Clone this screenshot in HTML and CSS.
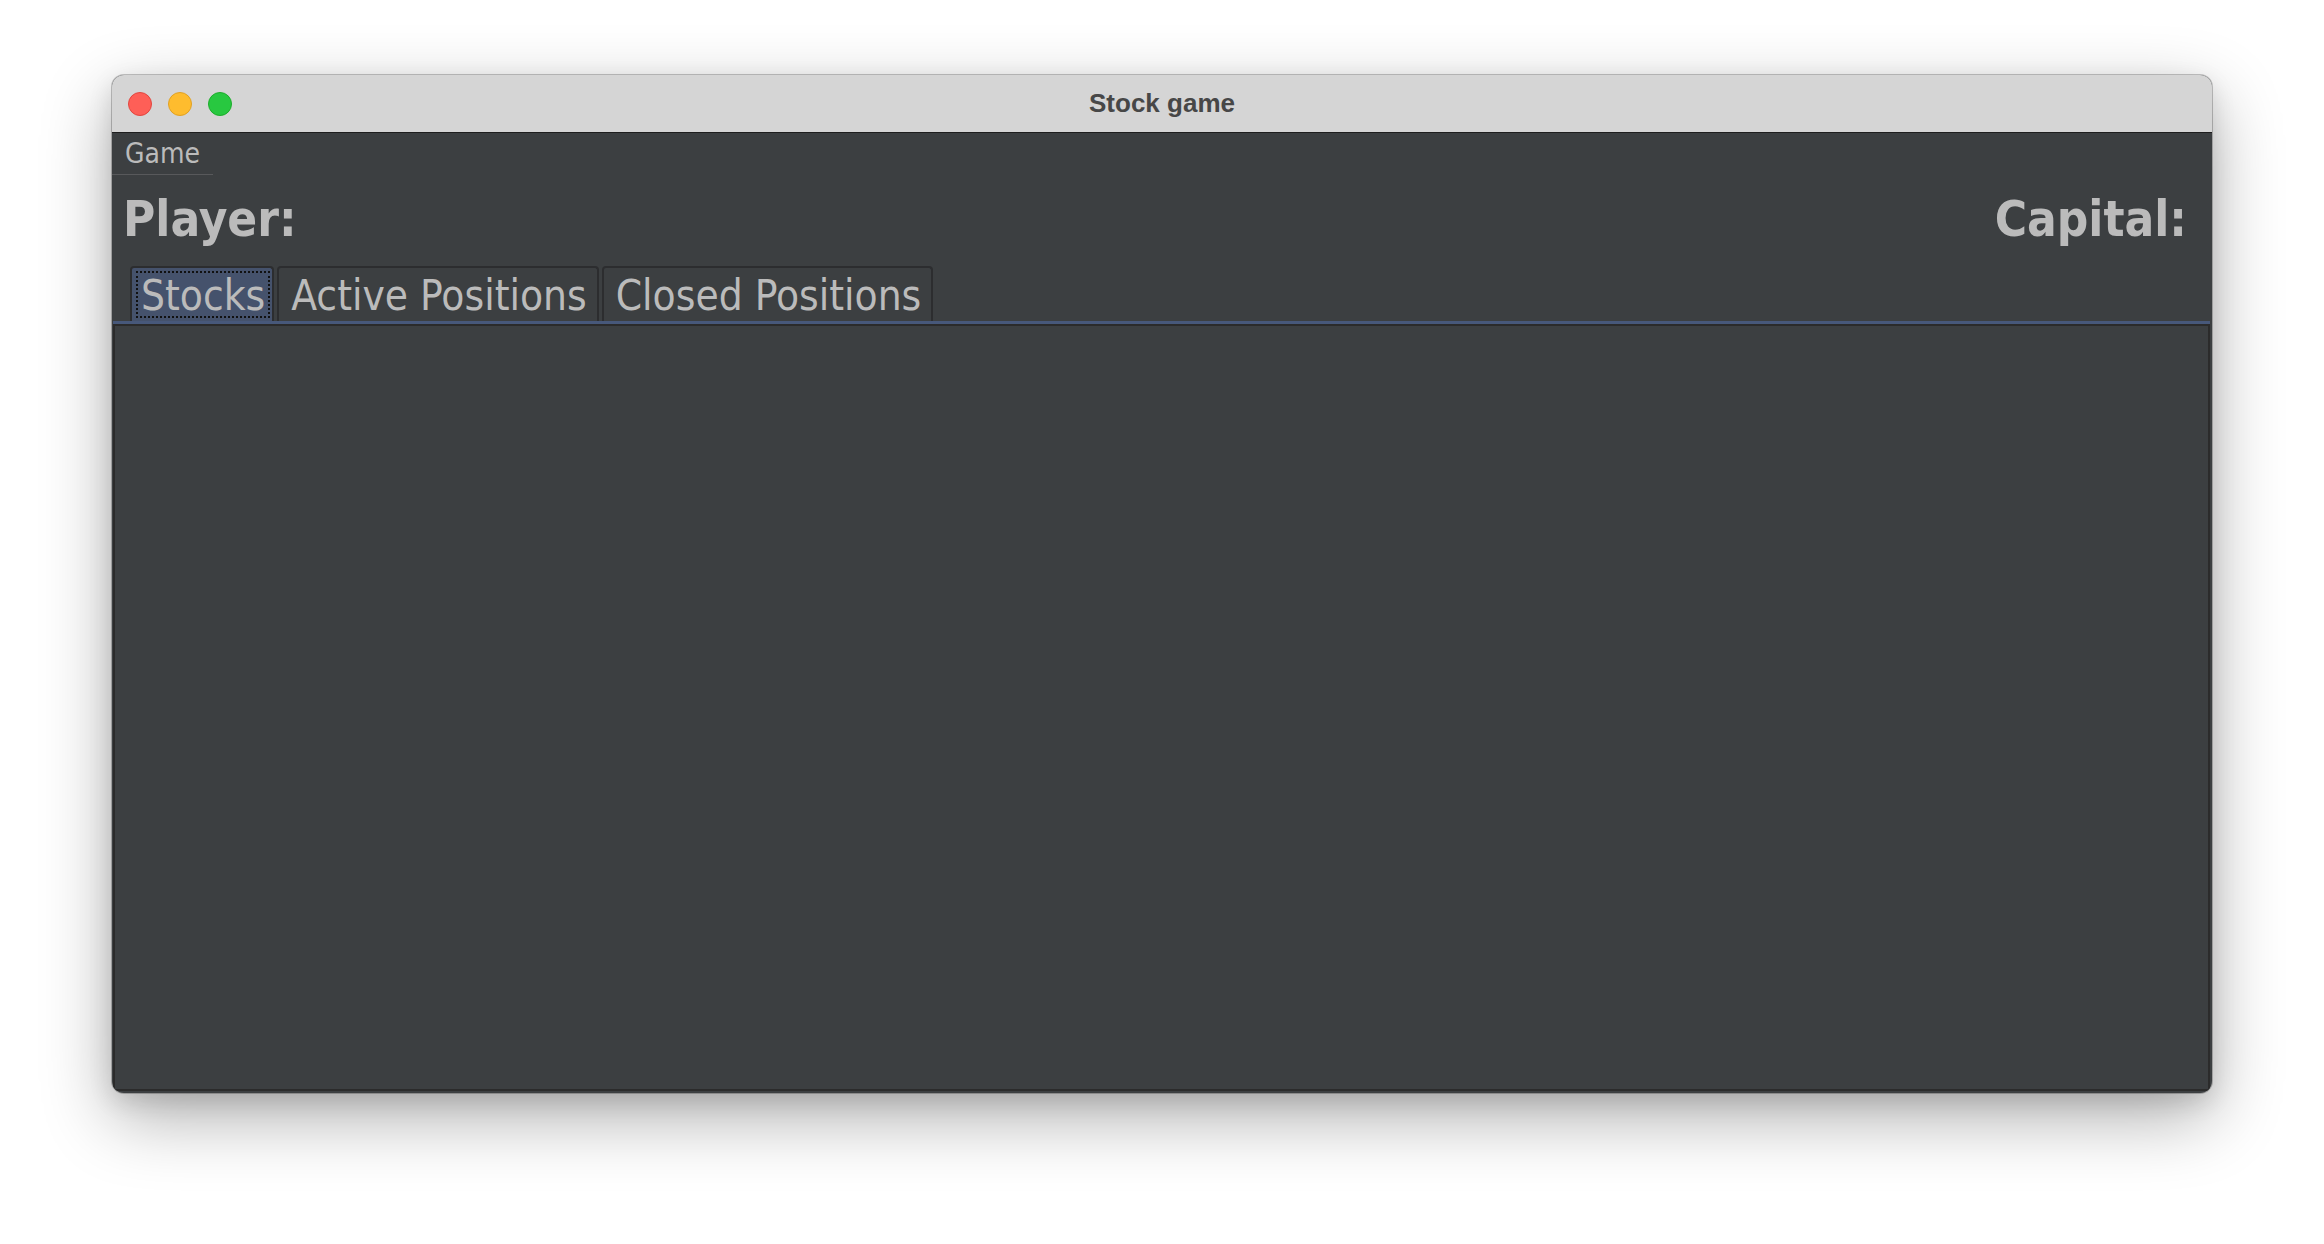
FILE: index.html
```html
<!DOCTYPE html>
<html>
<head>
<meta charset="utf-8">
<title>Stock game</title>
<link rel="stylesheet" href="styles.css">
</head>
<body>
<div class="window">
  <div class="titlebar">
    <div class="lights">
      <span class="light red"></span>
      <span class="light yellow"></span>
      <span class="light green"></span>
    </div>
    <div class="title">Stock game</div>
    <div></div>
  </div>
  <div class="menubar"><span class="menu">Game</span></div>
  <div class="header">
    <span class="big">Player:</span>
    <span class="big">Capital:</span>
  </div>
  <div class="tabpane">
    <div class="tabs">
      <div class="tab selected"><span class="focus">Stocks</span></div>
      <div class="tab">Active Positions</div>
      <div class="tab">Closed Positions</div>
    </div>
    <div class="strip"></div>
    <div class="panel"></div>
  </div>
</div>
</body>
</html>
```
FILE: styles.css
```css
html, body {
  margin: 0;
  padding: 0;
  background: #ffffff;
}
body {
  width: 2324px;
  height: 1244px;
  overflow: hidden;
  padding-top: 75px;
  padding-left: 112px;
  box-sizing: border-box;
}
.window {
  width: 2100px;
  height: 1018px;
  border-radius: 12px;
  overflow: hidden;
  background: #3c3f41;
  display: flex;
  flex-direction: column;
  box-shadow: 0 0 0 1px rgba(0,0,0,0.22), 0 24px 70px rgba(0,0,0,0.32), 0 8px 24px rgba(0,0,0,0.12);
}
.titlebar {
  height: 57px;
  flex: none;
  background: #d5d5d5;
  border-bottom: 1px solid #1e1e1e;
  display: grid;
  grid-template-columns: 1fr auto 1fr;
  align-items: center;
}
.lights {
  display: flex;
  gap: 16px;
  padding-left: 16px;
}
.light {
  width: 22px;
  height: 22px;
  border-radius: 50%;
  border: 1px solid;
}
.red { background: #fe5f57; border-color: #e2463f; }
.yellow { background: #febc2e; border-color: #e1a123; }
.green { background: #28c840; border-color: #1dad2b; }
.title {
  font-family: "Liberation Sans", Arial, sans-serif;
  font-weight: bold;
  font-size: 26px;
  color: #474747;
}
.menubar {
  flex: none;
  align-self: flex-start;
  width: 88px;
  height: 41px;
  padding-left: 13px;
  border-bottom: 1px solid #58595b;
  font-family: "DejaVu Sans Condensed", "DejaVu Sans", sans-serif;
  font-stretch: condensed;
  font-size: 28px;
  line-height: 42px;
  color: #bbbbbb;
}
.header {
  flex: none;
  display: flex;
  justify-content: space-between;
  padding: 21px 25px 0 11px;
  height: 70px;
  font-family: "DejaVu Sans Condensed", "DejaVu Sans", sans-serif;
  font-stretch: condensed;
  font-weight: bold;
  font-size: 49px;
  line-height: 48px;
  color: #bbbbbb;
}
.tabpane {
  flex: 1;
  display: flex;
  flex-direction: column;
  margin: 0 2px 2px 1px;
}
.tabs {
  display: flex;
  gap: 3px;
  padding-left: 17px;
  height: 55px;
  flex: none;
}
.tab {
  box-sizing: border-box;
  height: 55px;
  border: 2px solid #2c2d2f;
  border-bottom: none;
  border-radius: 4px 4px 0 0;
  padding: 0 10px 0 12px;
  font-family: "DejaVu Sans Condensed", "DejaVu Sans", sans-serif;
  font-stretch: condensed;
  font-size: 42px;
  line-height: 55px;
  color: #bbbbbb;
  background: #3c3f41;
}
.tab.selected {
  background: #45526c;
  padding: 3px 2px 0 4px;
  line-height: normal;
}
.focus {
  display: block;
  border: 2px dotted #111;
  padding: 0 3px 0 3px;
  height: 43px;
  line-height: 46px;
}
.strip {
  flex: none;
  height: 3px;
  background: #47587a;
}
.panel {
  flex: 1;
  border: 2px solid #2b2b2b;
  background: #3c3f41;
}
```
